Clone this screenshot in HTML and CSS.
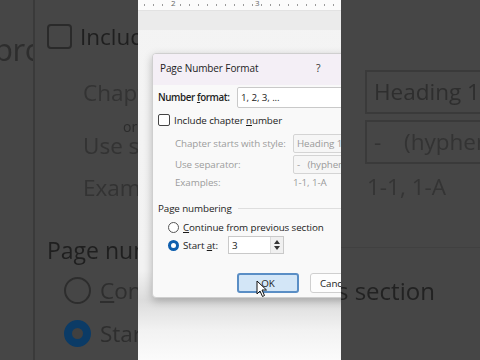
FILE: index.html
```html
<!DOCTYPE html>
<html>
<head>
<meta charset="utf-8">
<link rel="stylesheet" href="styles.css">
</head>
<body>
<div class="frame">
  <div class="side left">
    <div class="lcol">
      <div class="big-pro">pro</div>
    </div>
    <div class="vline"></div>
    <div class="rcol">
      <div class="z-check-row"><span class="z-box"></span><span class="z-text dark">Include chapter number</span></div>
      <div class="z-row z-chap">Chapter starts with style:</div>
      <div class="z-or">or</div>
      <div class="z-row z-use">Use separator:</div>
      <div class="z-row z-exam">Examples:</div>
      <div class="z-group dark">Page numbering</div>
      <div class="z-radio-row r1"><span class="z-radio"></span><span class="z-text"><u>C</u>ontinue from previous section</span></div>
      <div class="z-radio-row r2"><span class="z-radio on"></span><span class="z-text">Start at:</span></div>
    </div>
  </div>

  <div class="center">
    <div class="ruler">
      <span class="rnum n2">2</span>
      <span class="rnum n3">3</span>
    </div>
    <div class="band"></div>
    <div class="stage">
      <div class="dialog">
        <div class="titlebar">
          <span class="title">Page Number Format</span>
          <span class="help">?</span>
        </div>
        <div class="body">
          <div class="row d-fmt">
            <span class="lbl-fmt">Number <u>f</u>ormat:</span>
            <span class="field fmt">1, 2, 3, ...</span>
          </div>
          <div class="row d-chk">
            <span class="chk"></span>
            <span class="txt">Include chapter <u>n</u>umber</span>
          </div>
          <div class="row d-dis d-chap">
            <span class="dlbl">Chapter starts with style:</span>
            <span class="field dis">Heading 1</span>
          </div>
          <div class="row d-dis d-sep">
            <span class="dlbl">Use separator:</span>
            <span class="field dis">-&nbsp;&nbsp;&nbsp;(hyphen)</span>
          </div>
          <div class="row d-dis d-ex">
            <span class="dlbl">Examples:</span>
            <span class="extext">1-1, 1-A</span>
          </div>
          <div class="row d-group">
            <span class="gtxt">Page numbering</span>
            <span class="gline"></span>
          </div>
          <div class="row d-radio d-cont">
            <span class="radio"></span>
            <span class="txt"><u>C</u>ontinue from previous section</span>
          </div>
          <div class="row d-radio d-start">
            <span class="radio on"></span>
            <span class="txt">Start <u>a</u>t:</span>
            <span class="spin">
              <span class="spinval">3</span>
              <span class="spinbtns"><span class="up"></span><span class="down"></span></span>
            </span>
          </div>
          <div class="row d-btns">
            <span class="btn ok">OK</span>
            <span class="btn cancel">Cancel</span>
          </div>
        </div>
      </div>
      <svg class="cursor" width="12" height="18" viewBox="0 0 12 18">
        <path d="M1 1 L1 14 L4 11 L6.5 16.5 L8.5 15.5 L6 10 L10.5 10 Z" fill="#fff" stroke="#111" stroke-width="1" stroke-linejoin="round"/>
      </svg>
    </div>
  </div>

  <div class="side right">
    <div class="rbox b1">Heading 1</div>
    <div class="rbox b2"><span class="hy">-</span>(hyphen)</div>
    <div class="rr-ex">1-1, 1-A</div>
    <div class="rr-line"></div>
    <div class="rr-sec">s section</div>
  </div>
</div>
</body>
</html>
```

FILE: styles.css
```css
* { box-sizing: border-box; }
html, body { margin: 0; padding: 0; }
body {
  width: 480px;
  height: 360px;
  overflow: hidden;
  background: #454545;
  font-family: "Open Sans", "Noto Sans", sans-serif;
}
.frame {
  display: flex;
  width: 480px;
  height: 360px;
}

/* ---------- dark magnified sides ---------- */
.side {
  background: #464646;
  color: #2c2c2c;
  overflow: hidden;
  white-space: nowrap;
  height: 360px;
}
.side.left {
  width: 138px;
  display: flex;
  filter: blur(0.7px);
}
.lcol {
  width: 33px;
  overflow: hidden;
  flex: none;
}
.big-pro {
  font-size: 31px;
  margin-top: 28px;
  margin-left: -6px;
  color: #2d2d2d;
  letter-spacing: -0.5px;
}
.vline {
  width: 2px;
  flex: none;
  background: #3a3a3a;
}
.rcol {
  flex: 1;
  display: flex;
  flex-direction: column;
  overflow: hidden;
  font-size: 22.5px;
}
.z-check-row {
  display: flex;
  align-items: center;
  height: 28px;
  margin-top: 22px;
  margin-left: 12px;
}
.z-box {
  width: 25px;
  height: 25px;
  border: 2px solid #2a2a2a;
  border-radius: 4px;
  flex: none;
  margin-right: 8px;
}
.z-text { color: #2e2e2e; }
.dark { color: #1f1f1f; }
.z-row {
  height: 28px;
  line-height: 28px;
  margin-left: 48px;
  color: #333;
}
.z-chap { margin-top: 29px; }
.z-or {
  font-size: 14px;
  height: 16px;
  line-height: 16px;
  margin-left: 88px;
  margin-top: 12px;
  color: #2c2c2c;
}
.z-use { margin-top: -3px; }
.z-exam { margin-top: 14px; }
.z-group {
  height: 30px;
  line-height: 30px;
  margin-left: 12px;
  margin-top: 33px;
  font-size: 23px;
}
.z-radio-row {
  display: flex;
  align-items: center;
  height: 30px;
  margin-left: 29px;
}
.r1 { margin-top: 10px; }
.r2 { margin-top: 13px; }
.z-radio {
  width: 27px;
  height: 27px;
  border-radius: 50%;
  border: 2px solid #2d2d2d;
  flex: none;
  margin-right: 9px;
}
.z-radio.on {
  border: 8px solid #0b3b66;
  background: #404040;
}

.side.right {
  width: 139px;
  filter: blur(0.7px);
  font-size: 22.5px;
  display: flex;
  flex-direction: column;
}
.rbox {
  margin-left: 24px;
  width: 140px;
  height: 44px;
  border: 2px solid #3a3a3a;
  border-right: none;
  padding-left: 7px;
  line-height: 40px;
  color: #2e2e2e;
  flex: none;
}
.b1 { margin-top: 70px; }
.b2 { margin-top: 6px; color: #333; }
.hy { display: inline-block; width: 30px; }
.rr-ex {
  margin-left: 26px;
  margin-top: 9px;
  height: 28px;
  line-height: 28px;
  color: #343434;
  flex: none;
}
.rr-line {
  height: 1px;
  background: #404040;
  margin-top: 46px;
  flex: none;
}
.rr-sec {
  margin-top: 28px;
  margin-left: -4px;
  height: 30px;
  line-height: 30px;
  font-size: 24px;
  color: #222;
  flex: none;
}

/* ---------- center video strip ---------- */
.center {
  width: 203px;
  flex: none;
  height: 360px;
  overflow: hidden;
  position: relative;
  background: linear-gradient(#f4f4f4 0, #f2f2f2 270px, #dcdcdc 300px, #f2f2f2 330px, #fbfbfb 360px);
  display: flex;
  flex-direction: column;
}
.ruler {
  height: 10px;
  background: #fbfbfb;
  position: relative;
  background-image: radial-gradient(circle, #9a9a9a 0.6px, transparent 0.9px);
  background-size: 9px 10px;
  background-position: 2px 0;
  flex: none;
}
.rnum {
  position: absolute;
  top: -3px;
  font-size: 8px;
  color: #666;
  background: #fbfbfb;
  padding: 0 1px;
}
.n2 { left: 32px; }
.n3 { left: 116px; }
.band {
  height: 20px;
  background: #ebebeb;
  border-top: 1px solid #e2e2e2;
  flex: none;
}
.stage {
  flex: 1;
  padding-top: 23px;
  padding-left: 14px;
  position: relative;
}
.dialog {
  width: 230px;
  height: 245px;
  background: #f9f9f9;
  border: 1px solid #cfcfcf;
  border-radius: 4px;
  box-shadow: 0 3px 8px rgba(0,0,0,0.25);
  display: flex;
  flex-direction: column;
  color: #1b1b1b;
  font-size: 9.8px;
  letter-spacing: -0.1px;
  white-space: nowrap;
  overflow: hidden;
}
.titlebar {
  height: 31px;
  background: #f4eff6;
  display: flex;
  align-items: center;
  padding-left: 7px;
  padding-bottom: 4px;
  flex: none;
}
.title { width: 156px; font-size: 10px; color: #222; flex: none; }
.help { font-size: 10.5px; color: #333; }
.body {
  padding-left: 5px;
  display: flex;
  flex-direction: column;
}
.row {
  display: flex;
  align-items: center;
  flex: none;
}
.d-fmt { height: 21px; margin-top: 2px; }
.lbl-fmt { width: 79px; flex: none; font-weight: 600; color: #222; letter-spacing: -0.4px; }
.field {
  height: 100%;
  border: 1px solid #c9c9c9;
  background: #fff;
  display: flex;
  align-items: center;
  padding-left: 3px;
  width: 120px;
  flex: none;
  border-radius: 2px;
}
.fmt { color: #222; }
.d-chk { height: 18px; margin-top: 3px; }
.chk {
  width: 12px;
  height: 12px;
  border: 1px solid #444;
  border-radius: 2px;
  margin-right: 4px;
  background: #fff;
  flex: none;
}
.d-dis .dlbl { width: 118px; flex: none; margin-left: 17px; color: #9c9c9c; }
.d-chap { height: 19px; margin-top: 5px; }
.d-sep { height: 19px; margin-top: 2px; }
.field.dis {
  background: #f6f6f6;
  border-color: #d4d4d4;
  color: #9a9a9a;
}
.d-ex { height: 14px; margin-top: 1px; }
.extext { color: #9a9a9a; }
.d-group { height: 16px; margin-top: 11px; }
.gtxt { color: #222; margin-right: 6px; }
.gline { flex: 1; height: 1px; background: #dedede; }
.d-radio { height: 18px; margin-left: 10px; }
.d-cont { margin-top: 2px; }
.d-start { margin-top: 0; }
.radio {
  width: 11px;
  height: 11px;
  border-radius: 50%;
  border: 1px solid #555;
  background: #fff;
  margin-right: 4px;
  flex: none;
}
.radio.on {
  border: 3px solid #0f5fae;
  background: #fff;
}
.spin {
  height: 18px;
  width: 56px;
  margin-left: 10px;
  border: 1px solid #c9c9c9;
  background: #fff;
  display: flex;
  align-items: center;
  justify-content: space-between;
  padding-left: 3px;
  flex: none;
}
.spinbtns {
  width: 13px;
  height: 16px;
  border-left: 1px solid #dcdcdc;
  background: #f0f0f0;
  display: flex;
  flex-direction: column;
  align-items: center;
  justify-content: center;
  gap: 2px;
}
.up, .down { width: 0; height: 0; border-left: 3px solid transparent; border-right: 3px solid transparent; }
.up { border-bottom: 4px solid #333; }
.down { border-top: 4px solid #333; }
.d-btns { height: 20px; margin-top: 19px; margin-left: 79px; }
.btn {
  height: 20px;
  display: flex;
  align-items: center;
  justify-content: center;
  border-radius: 3px;
  flex: none;
}
.ok {
  width: 62px;
  background: #d3e6f7;
  border: 2px solid #5a8ec5;
  color: #1b1b1b;
}
.cancel {
  width: 64px;
  margin-left: 11px;
  background: #fdfdfd;
  border: 1px solid #cfcfcf;
  justify-content: flex-start;
  padding-left: 9px;
}
.cursor {
  position: absolute;
  left: 118px;
  top: 250px;
}
```
